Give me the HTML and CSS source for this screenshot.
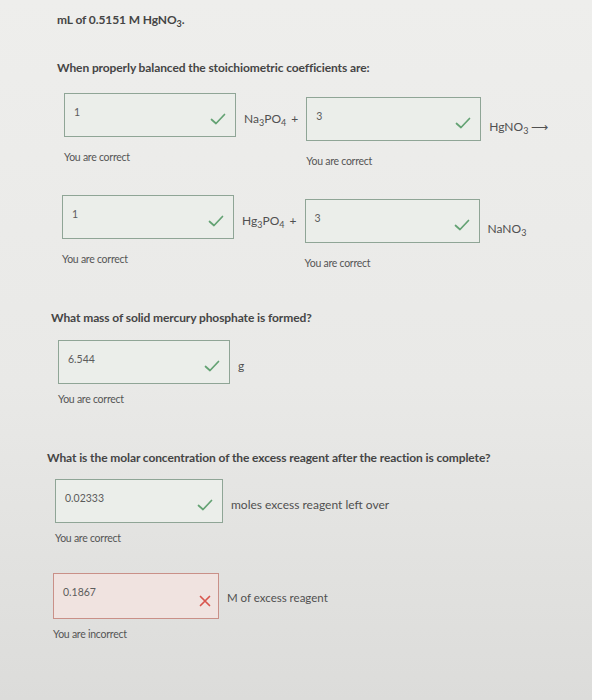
FILE: index.html
```html
<!DOCTYPE html>
<html>
<head>
<meta charset="utf-8">
<link rel="stylesheet" href="styles.css">
</head>
<body>
<div class="page">
  <p class="q q-top">mL of 0.5151 M HgNO<sub>3</sub>.</p>
  <p class="q q-balance">When properly balanced the stoichiometric coefficients are:</p>

  <div class="eq-row row1">
    <div class="field">
      <div class="box ok"><span class="val">1</span><svg class="mark" viewBox="0 0 16 12"><path d="M1.5 6.5 L6 10.5 L14.5 1.5" /></svg></div>
      <div class="fb">You are correct</div>
    </div>
    <span class="lbl">Na<sub>3</sub>PO<sub>4</sub> <span class="plus">+</span></span>
    <div class="field shift">
      <div class="box ok wide"><span class="val">3</span><svg class="mark" viewBox="0 0 16 12"><path d="M1.5 6.5 L6 10.5 L14.5 1.5" /></svg></div>
      <div class="fb">You are correct</div>
    </div>
    <span class="lbl shift">HgNO<sub>3</sub> &#10230;</span>
  </div>

  <div class="eq-row row2">
    <div class="field">
      <div class="box ok"><span class="val">1</span><svg class="mark" viewBox="0 0 16 12"><path d="M1.5 6.5 L6 10.5 L14.5 1.5" /></svg></div>
      <div class="fb">You are correct</div>
    </div>
    <span class="lbl">Hg<sub>3</sub>PO<sub>4</sub> <span class="plus">+</span></span>
    <div class="field shift">
      <div class="box ok wide"><span class="val">3</span><svg class="mark" viewBox="0 0 16 12"><path d="M1.5 6.5 L6 10.5 L14.5 1.5" /></svg></div>
      <div class="fb">You are correct</div>
    </div>
    <span class="lbl shift">NaNO<sub>3</sub></span>
  </div>

  <p class="q q-mass">What mass of solid mercury phosphate is formed?</p>
  <div class="eq-row row3">
    <div class="field">
      <div class="box ok"><span class="val">6.544</span><svg class="mark" viewBox="0 0 16 12"><path d="M1.5 6.5 L6 10.5 L14.5 1.5" /></svg></div>
      <div class="fb tight">You are correct</div>
    </div>
    <span class="lbl">g</span>
  </div>

  <p class="q q-molar">What is the molar concentration of the excess reagent after the reaction is complete?</p>
  <div class="eq-row row4">
    <div class="field">
      <div class="box ok short"><span class="val">0.02333</span><svg class="mark" viewBox="0 0 16 12"><path d="M1.5 6.5 L6 10.5 L14.5 1.5" /></svg></div>
      <div class="fb tight">You are correct</div>
    </div>
    <span class="lbl">moles excess reagent left over</span>
  </div>

  <div class="eq-row row5">
    <div class="field">
      <div class="box bad"><span class="val">0.1867</span><svg class="mark x" viewBox="0 0 12 12"><path d="M1.5 1.5 L10.5 10.5 M10.5 1.5 L1.5 10.5" /></svg></div>
      <div class="fb tight">You are incorrect</div>
    </div>
    <span class="lbl small">M of excess reagent</span>
  </div>
</div>
</body>
</html>
```

FILE: styles.css
```css
html, body {
  margin: 0;
  padding: 0;
}
body {
  width: 592px;
  height: 700px;
  overflow: hidden;
  background: linear-gradient(180deg, #eeeeec 0%, #e9e9e7 55%, #dcdcda 100%);
  font-family: Lato, "Liberation Sans", sans-serif;
  color: #3e3e3e;
}
.page {
  padding: 12px 0 0 57px;
}
.q {
  margin: 0;
  font-size: 12px;
  font-weight: 700;
  color: #454545;
  letter-spacing: -0.1px;
}
sub {
  font-size: 0.75em;
  vertical-align: -0.38em;
  line-height: 0;
}
.q-balance { margin-top: 33px; }
.q-mass { margin-top: 41px; margin-left: -6px; }
.q-molar { margin-top: 45px; margin-left: -10px; }

.eq-row {
  display: flex;
  align-items: flex-start;
}
.row1 { margin-top: 18px; margin-left: 7px; }
.row2 { margin-top: 28px; margin-left: 5px; }
.row3 { margin-top: 15px; margin-left: 1px; }
.row4 { margin-top: 14px; margin-left: -2px; }
.row5 { margin-top: 29px; margin-left: -4px; }

.field {
  display: flex;
  flex-direction: column;
}
.field.shift { margin-top: 4px; }

.box {
  position: relative;
  box-sizing: border-box;
  width: 172px;
  height: 44px;
  border: 1.5px solid #8fa596;
  background: #ebeeea;
}
.box.wide { width: 175px; }
.box.short { width: 168px; }
.box.bad {
  border-color: #c99088;
  background: #f0e3e0;
  height: 46px;
  width: 166px;
}
.val {
  position: absolute;
  left: 9px;
  top: 12px;
  font-size: 10.5px;
  color: #5c5c5c;
}
.mark {
  position: absolute;
  right: 9px;
  bottom: 11px;
  width: 16px;
  height: 12px;
  fill: none;
  stroke: #63a273;
  stroke-width: 1.7;
  stroke-linecap: round;
  stroke-linejoin: round;
}
.mark.x {
  width: 12px;
  height: 12px;
  right: 7px;
  bottom: 11px;
  stroke: #d8554d;
  stroke-width: 1.7;
}
.fb {
  margin-top: 14px;
  font-size: 10.5px;
  color: #555;
  letter-spacing: -0.25px;
}
.fb.tight { margin-top: 9px; }
.lbl {
  margin: 18px 8px 0 8px;
  font-size: 12px;
  color: #505050;
  white-space: nowrap;
}
.lbl.small { font-size: 11.5px; }
.plus { margin-left: 2px; }
.lbl.shift { margin-top: 26px; }
```
